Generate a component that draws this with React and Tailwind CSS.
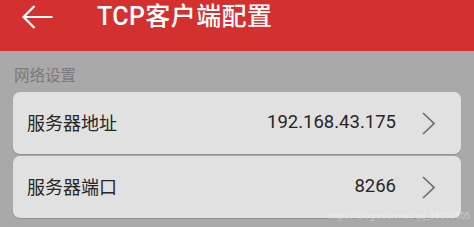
import React from 'react';

const font = { fontFamily: 'Roboto, "Noto Sans CJK SC", sans-serif' };

const Chevron = () => (
  <svg width="13" height="23" viewBox="0 0 13 23" fill="none" className="shrink-0">
    <path d="M1 1 L12 11.5 L1 22" stroke="#6b6b6b" strokeWidth="1.6" strokeLinejoin="miter" />
  </svg>
);

const Row = ({ label, value }) => (
  <div className="flex h-[62px] items-center rounded-[7px] bg-[#e1e1e1] pl-[14px] pr-[26px] shadow-[0_1px_1px_rgba(0,0,0,0.15)]">
    <span className="flex-1 text-[18px] text-[#262626]">{label}</span>
    <span className="mr-[26px] text-[18.5px] text-[#262626]">{value}</span>
    <Chevron />
  </div>
);

const App = () => {
  return (
    <div className="relative h-[227px] w-[474px] overflow-hidden bg-[#a9a9a9]" style={font}>
      <div className="flex h-[51px] items-start bg-[#d3302f] pt-[1px]">
        <div className="flex h-[31px] w-[97px] items-center pl-[22px]">
          <svg width="31" height="24" viewBox="0 0 31 24" fill="none">
            <path d="M1.5 12 H30.5 M12.5 1 L1.5 12 L12.5 23" stroke="#fff" strokeWidth="2.2" />
          </svg>
        </div>
        <h1 className="text-[25px] font-medium leading-[31px] tracking-[0.4px] text-white">TCP客户端配置</h1>
      </div>

      <div className="px-[14px] pt-[15px] text-[15.5px] leading-[20px] text-[#7a7a7a]">网络设置</div>

      <div className="mt-[6px] flex flex-col gap-[2px] px-[13px]">
        <Row label="服务器地址" value="192.168.43.175" />
        <Row label="服务器端口" value="8266" />
      </div>

      <div className="absolute bottom-[4px] right-[4px] text-[9px] text-white/40">https://blog.csdn.net/qq_36050405</div>
    </div>
  );
};

export default App;
